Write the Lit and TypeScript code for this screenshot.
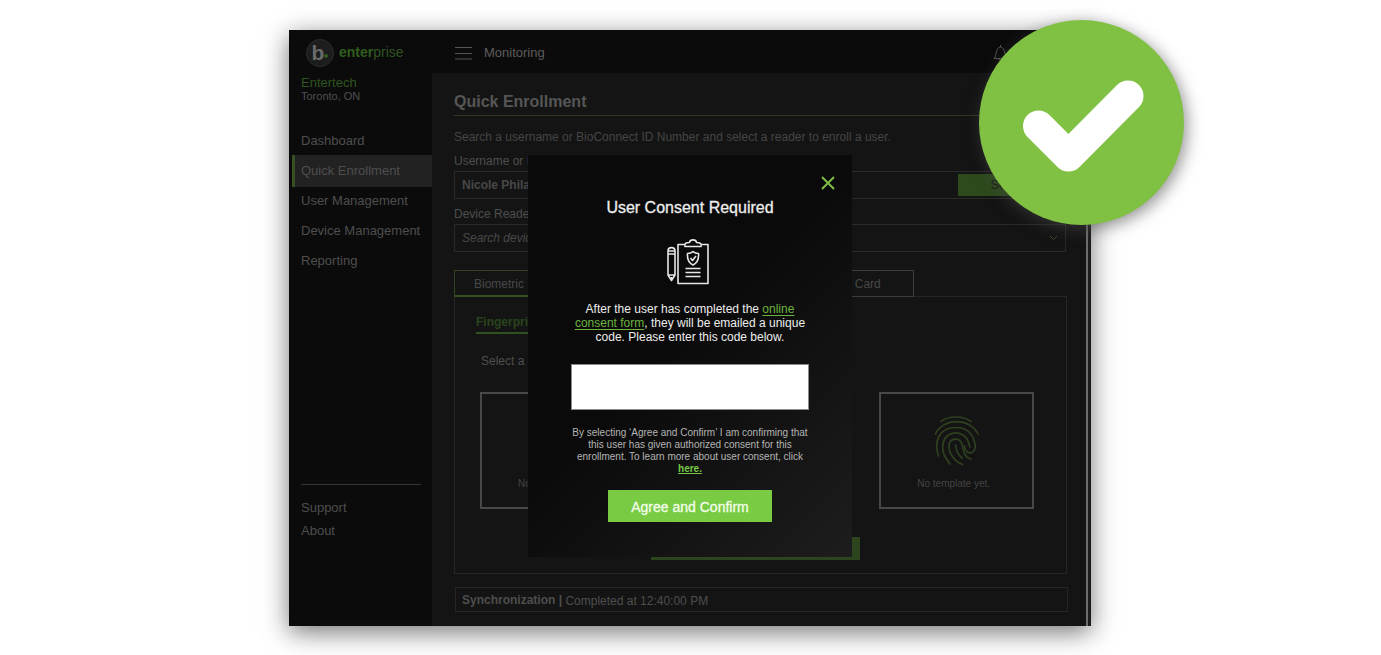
import { LitElement, html, css, svg } from "lit";
import { customElement } from "lit/decorators.js";

const fingerprint = svg`
  <g fill="none" stroke="currentColor" stroke-width="1.7" stroke-linecap="round">
    <path d="M7 6.500C14 .5 29 .5 37 6.500" />
    <path d="M1.500 19C9 2.500 36 2.500 44 19" />
    <path d="M4.500 41C0 27 4 12.500 22 12.500C33 12.500 39 19 41 29C43 40 31 41 30.500 31" />
    <path d="M16 49C9 40 8 35 9 29C11 15 30 14.500 34 26L36 32" />
    <path d="M28.500 49.500C20 46 14.500 38 15 30C16 22.500 26 22 28 29C30 38 31 43 37 44" />
    <path d="M21.500 30C22 36 24.500 40 28 43" />
  </g>`;

@customElement("enroll-card")
export class EnrollCard extends LitElement {
  static styles = css`
    :host {
      display: flex;
      flex-direction: column;
      align-items: center;
      box-sizing: border-box;
      height: 117px;
      padding-top: 21px;
      border: 2px solid #484848;
      color: #444;
      font-size: 10px;
      line-height: 12px;
    }
    svg {
      width: 46px;
      height: 52px;
      margin-bottom: 11px;
      color: #2f4021;
    }
    span {
      padding-right: 6px;
    }
  `;
  render() {
    return html`<svg viewBox="0 0 46 52" aria-hidden="true">${fingerprint}</svg>
      <span>No template yet.</span>`;
  }
}

@customElement("consent-dialog")
export class ConsentDialog extends LitElement {
  static styles = css`
    :host {
      display: flex;
      flex-direction: column;
      align-items: center;
      box-sizing: border-box;
      padding: 20px 40px 35px;
      background: linear-gradient(135deg, #0a0a0a 45%, #1d1d1d);
      color: #ededed;
      text-align: center;
    }
    .close {
      align-self: flex-end;
      width: 16px;
      height: 16px;
      margin-right: -24px;
      padding: 0;
      border: 0;
      background: none;
      color: #80bb45;
    }
    .close svg {
      display: block;
    }
    h2 {
      margin: 7px 0 20px;
      font-size: 16px;
      font-weight: 400;
      line-height: 20px;
      -webkit-text-stroke: 0.3px currentColor;
    }
    .art {
      width: 44px;
      height: 48px;
      margin: 0 6px 16px 0;
    }
    p {
      margin: 0;
      font-size: 12px;
      line-height: 14px;
      white-space: nowrap;
    }
    a {
      color: #6cb33f;
      text-underline-offset: 2px;
    }
    .code {
      box-sizing: border-box;
      width: 238px;
      height: 46px;
      margin: 20px 0 17px;
      padding: 0 12px;
      border: 1px solid #8c8c8c;
      border-radius: 0;
      background: #fff;
      font: inherit;
      font-size: 16px;
    }
    .terms {
      color: #b4b4b4;
      font-size: 10px;
      line-height: 12px;
    }
    .terms a {
      color: #77c846;
      font-weight: 700;
      text-underline-offset: 1px;
    }
    .agree {
      width: 164px;
      height: 32px;
      margin-top: 15px;
      padding: 2px 0 0;
      border: 0;
      background: #79cb44;
      color: #f2ffe9;
      font: inherit;
      font-size: 14px;
      -webkit-text-stroke: 0.3px currentColor;
    }
  `;
  render() {
    return html`
      <button class="close" aria-label="Close">
        <svg width="16" height="16" viewBox="0 0 16 16" fill="none" stroke="currentColor" stroke-width="2">
          <path d="M2 2L14 14M14 2L2 14" />
        </svg>
      </button>
      <h2>User Consent Required</h2>
      <svg class="art" viewBox="0 0 44 48" fill="none" stroke="#e6e6e6" stroke-width="1.6" stroke-linejoin="round" aria-hidden="true">
        <path d="M20 6.500H13V45.500H43V6.500H36" />
        <path d="M20 8.500C19 5.500 21 4.500 24.500 4.500C25 1 31 1 31.500 4.500C35 4.500 37 5.500 36 8.500Z" />
        <path d="M28 13.500C29.500 15 31.500 15.500 33.500 15.500C34 21 33 24.500 28 27C23 24.500 22 21 22.500 15.500C24.500 15.500 26.500 15 28 13.500Z" />
        <path d="M25.500 20L27.500 22.500L31 18" />
        <path d="M20.500 30.500H35.500M20.500 34.500H35.500M20.500 38.500H35.500" />
        <path d="M3 13C3 8.500 10 8.500 10 13V37L6.500 42.500L3 37ZM3 13H10M3 16H10M3 37H10M6.500 39V42" />
      </svg>
      <p>
        <label for="code">After the user has completed the <a href="#form">online</a><br />
        <a href="#form">consent form</a>, they will be emailed a unique<br />
        code. Please enter this code below.</label>
      </p>
      <input class="code" id="code" type="text" />
      <p class="terms">
        By selecting ‘Agree and Confirm’ I am confirming that<br />
        this user has given authorized consent for this<br />
        enrollment. To learn more about user consent, click<br />
        <a href="#more">here.</a>
      </p>
      <button class="agree">Agree and Confirm</button>
    `;
  }
}

@customElement("app-root")
export class AppRoot extends LitElement {
  static styles = css`
    :host {
      display: flex;
      justify-content: center;
      box-sizing: border-box;
      min-height: 100vh;
      padding: 30px 1px 29px 0;
      overflow: hidden;
      background: #fff;
      font-family: "Liberation Sans", Arial, sans-serif;
      font-size: 13px;
      line-height: 16px;
      color: #4e4e4e;
    }
    .window {
      position: relative;
      display: flex;
      box-sizing: border-box;
      flex: 1;
      max-width: 802px;
      border-right: 3px solid #1c1c1c;
      background: #0b0b0b;
      box-shadow: 0 6px 24px rgba(0, 0, 0, 0.55);
    }
    .side {
      display: flex;
      flex-direction: column;
      box-sizing: border-box;
      width: 143px;
      flex: none;
      padding: 9px 0 87px 3px;
    }
    a {
      color: inherit;
      text-decoration: none;
    }
    .brand {
      display: flex;
      align-items: center;
      gap: 5px;
      margin-left: 14px;
      color: #2f5420;
      font-size: 14px;
    }
    .brand b {
      color: #305e1e;
    }
    .word {
      padding-bottom: 3px;
    }
    .mark {
      display: flex;
      align-items: center;
      justify-content: center;
      box-sizing: border-box;
      width: 28px;
      height: 28px;
      border: 1px solid #2b2e28;
      border-radius: 50%;
      background: #1c1d1c;
      color: #6a6a6a;
      font-size: 21px;
      font-weight: 700;
    }
    .mark i {
      align-self: flex-end;
      width: 4px;
      height: 4px;
      margin-bottom: 8px;
      border-radius: 50%;
      background: #305e1e;
    }
    .org {
      margin: 8px 0 0 9px;
      color: #2f5520;
    }
    .place {
      margin: -1px 0 24px 9px;
      font-size: 11px;
      line-height: 12px;
    }
    .nav a {
      display: block;
      padding: 7px 0 7px 9px;
    }
    .nav .on {
      margin: -1px 0;
      padding: 8px 0 8px 6px;
      border-left: 3px solid #36511f;
      background: #222;
    }
    .foot {
      display: flex;
      flex-direction: column;
      gap: 7px;
      margin: auto 11px 0 9px;
      padding-top: 15px;
      border-top: 1px solid #353535;
    }
    .page {
      display: flex;
      flex: 1;
      flex-direction: column;
      border-right: 2px solid #6d6d6d;
      background: #141414;
    }
    .top {
      display: flex;
      align-items: center;
      gap: 12px;
      box-sizing: border-box;
      height: 43px;
      padding: 2px 78px 0 23px;
      background: #0b0b0b;
      color: #5c5c5c;
    }
    .menu,
    .bell {
      display: flex;
      padding: 0;
      border: 0;
      background: none;
      color: #555;
    }
    .bell {
      margin-left: auto;
    }
    .body {
      display: flex;
      flex: 1;
      flex-direction: column;
      padding: 19px 19px 14px 22px;
    }
    h1 {
      margin: 0 0 13px;
      padding-bottom: 3px;
      border-bottom: 1px solid #2c3a1c;
      color: #565656;
      font-size: 16px;
      line-height: 20px;
    }
    .hint {
      margin: 0 0 8px;
      font-size: 12px;
      color: #454545;
    }
    .label {
      font-size: 12px;
      margin-bottom: 2px;
    }
    .field {
      display: flex;
      box-sizing: border-box;
      height: 28px;
      margin: 0 1px 7px 0;
      border: 1px solid #292929;
    }
    .field input,
    .field select {
      flex: 1;
      min-width: 0;
      padding: 0 7px;
      border: 0;
      background: none;
      color: #484848;
      font: inherit;
      font-size: 12px;
      appearance: none;
    }
    .field input {
      font-weight: 700;
    }
    .field select {
      font-style: italic;
    }
    .field svg {
      align-self: center;
      margin-right: 7px;
    }
    .go {
      width: 106px;
      margin: 2px 1px 2px 0;
      padding: 0;
      border: 0;
      background: #2d4a1c;
      color: #151c11;
      font: inherit;
    }
    .tabs {
      display: flex;
      justify-content: space-between;
      width: 75%;
      height: 27px;
      margin: 11px 0 -1px 0;
    }
    .tab {
      position: relative;
      box-sizing: border-box;
      width: 33%;
      padding: 0 19px;
      border: 1px solid #3c3c3c;
      background: none;
      color: #484848;
      font: inherit;
      font-size: 12px;
      text-align: left;
    }
    .tab.on {
      padding-top: 2px;
      border-color: #33421f;
      border-bottom: 2px solid #33521f;
    }
    .tab.end {
      padding-right: 32px;
      text-align: right;
    }
    .panel {
      display: flex;
      flex: 1;
      flex-direction: column;
      align-items: flex-start;
      padding: 17px 32px 13px 21px;
      border: 1px solid #262626;
    }
    .sub {
      padding: 0 0 2px;
      border-bottom: 2px solid #2f5220;
      color: #2a451d;
      font-size: 12px;
      font-weight: 700;
    }
    .pick {
      margin: 19px 0 23px 5px;
      font-size: 12px;
    }
    .cards {
      display: grid;
      grid-template-columns: repeat(3, 1fr);
      gap: 45px;
      align-self: stretch;
      margin-left: 4px;
    }
    .enroll {
      align-self: center;
      width: 209px;
      height: 23px;
      margin-top: auto;
      border: 0;
      background: #2d451f;
    }
    .sync {
      display: flex;
      box-sizing: border-box;
      height: 25px;
      margin: 13px -1px 0 1px;
      padding: 4px 6px;
      border: 1px solid #262626;
      font-size: 12px;
      white-space: pre;
    }
    .sync span {
      padding-top: 1px;
    }
    .dialog {
      position: absolute;
      z-index: 2;
      top: 125px;
      left: 239px;
      right: 236px;
    }
    .badge {
      position: absolute;
      z-index: 3;
      top: -10px;
      right: -96px;
      width: 205px;
      height: 205px;
      border-radius: 50%;
      background: #80c042;
      box-shadow: 3px 4px 16px rgba(75, 75, 75, 0.6);
    }
  `;

  render() {
    return html`
      <div class="window">
        <aside class="side">
          <div class="brand">
            <span class="mark">b<i></i></span>
            <span class="word"><b>enter</b>prise</span>
          </div>
          <div class="org">Entertech</div>
          <div class="place">Toronto, ON</div>
          <nav class="nav">
            ${["Dashboard", "Quick Enrollment", "User Management", "Device Management", "Reporting"].map(
              (name) => html`<a href="#" class=${name === "Quick Enrollment" ? "on" : ""}>${name}</a>`
            )}
          </nav>
          <div class="foot">
            <a href="#">Support</a>
            <a href="#">About</a>
          </div>
        </aside>
        <main class="page">
          <header class="top">
            <button class="menu" aria-label="Menu">
              <svg width="17" height="14" viewBox="0 0 17 14" stroke="currentColor" stroke-width="1.2">
                <path d="M0 1.500H17M0 7.500H17M0 13H17" />
              </svg>
            </button>
            <span>Monitoring</span>
            <button class="bell" aria-label="Notifications">
              <svg width="15" height="18" viewBox="0 0 15 18" fill="none" stroke="currentColor">
                <path d="M1 14.500C4 12 2 4 7.500 3C13 4 11 12 14 14.500ZM6 15C6 17 9 17 9 15M7.500 1V3" />
              </svg>
            </button>
          </header>
          <div class="body">
            <h1>Quick Enrollment</h1>
            <p class="hint">Search a username or BioConnect ID Number and select a reader to enroll a user.</p>
            <label class="label" for="user">Username or ID</label>
            <div class="field">
              <input id="user" type="text" value="Nicole Phila" />
              <button class="go">Search</button>
            </div>
            <label class="label" for="reader">Device Reader</label>
            <div class="field">
              <select id="reader">
                <option>Search device</option>
              </select>
              <svg width="9" height="6" viewBox="0 0 9 6" fill="none" stroke="#3c4a33" aria-hidden="true">
                <path d="M1 1L4.500 4.500L8 1" />
              </svg>
            </div>
            <div class="tabs">
              <button class="tab on">Biometric</button>
              <button class="tab end">Card</button>
            </div>
            <section class="panel">
              <div class="sub">Fingerprint</div>
              <div class="pick">Select a</div>
              <div class="cards">
                <enroll-card></enroll-card>
                <enroll-card></enroll-card>
                <enroll-card></enroll-card>
              </div>
              <button class="enroll" aria-label="Enroll"></button>
            </section>
            <div class="sync"><b>Synchronization | </b><span>Completed at 12:40:00 PM</span></div>
          </div>
        </main>
        <consent-dialog class="dialog" role="dialog" aria-label="User Consent Required"></consent-dialog>
        <svg class="badge" viewBox="0 0 205 205" role="img" aria-label="Done">
          <path d="M59.500 106L89.500 136L149 76" fill="none" stroke="#fff" stroke-width="31" stroke-linecap="round" stroke-linejoin="round" />
        </svg>
      </div>
    `;
  }
}
